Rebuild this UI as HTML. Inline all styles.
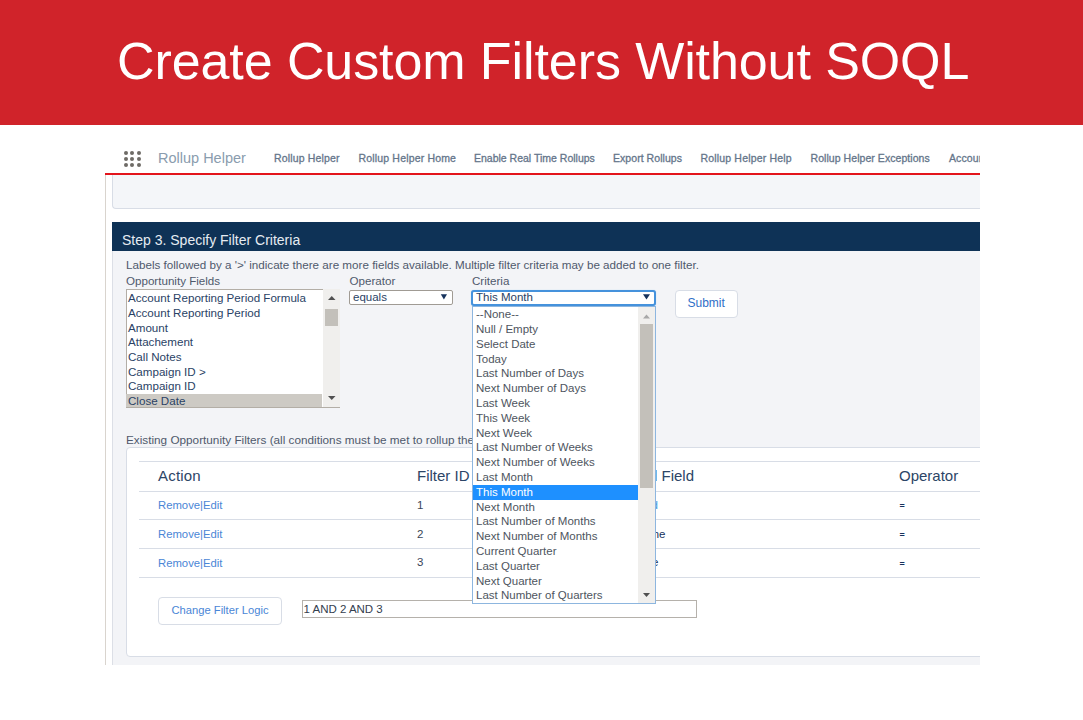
<!DOCTYPE html>
<html><head><meta charset="utf-8"><style>
html,body{margin:0;padding:0;background:#fff;width:1083px;height:720px;overflow:hidden;position:relative}
body{font-family:"Liberation Sans", sans-serif}
.t{position:absolute;white-space:nowrap;line-height:1}
</style></head><body>
<div style="position:absolute;left:0px;top:0px;width:1083px;height:125px;background:#d0232a"></div>
<div class="t" style="left:117px;top:34.98px;font-size:52px;color:#fff;letter-spacing:-0.09px">Create Custom Filters Without SOQL</div>
<div style="position:absolute;left:0;top:0;width:980px;height:720px;overflow:hidden">
<div style="position:absolute;left:105px;top:173px;width:875px;height:2px;background:#e3151c"></div>
<div style="position:absolute;left:105px;top:175px;width:1px;height:490px;background:#d9d4ce"></div>
<div style="position:absolute;left:112px;top:175px;width:868px;height:34px;background:#f4f6f9;border-left:1px solid #d8dde6;border-bottom:1px solid #d8dde6;border-bottom-left-radius:4px;box-sizing:border-box"></div>
<div style="position:absolute;left:124.40px;top:151.35px;width:4px;height:4px;border-radius:50%;background:#6e6b66"></div>
<div style="position:absolute;left:124.40px;top:157.30px;width:4px;height:4px;border-radius:50%;background:#6e6b66"></div>
<div style="position:absolute;left:124.40px;top:163.40px;width:4px;height:4px;border-radius:50%;background:#6e6b66"></div>
<div style="position:absolute;left:130.30px;top:151.35px;width:4px;height:4px;border-radius:50%;background:#6e6b66"></div>
<div style="position:absolute;left:130.30px;top:157.30px;width:4px;height:4px;border-radius:50%;background:#6e6b66"></div>
<div style="position:absolute;left:130.30px;top:163.40px;width:4px;height:4px;border-radius:50%;background:#6e6b66"></div>
<div style="position:absolute;left:137.40px;top:151.35px;width:4px;height:4px;border-radius:50%;background:#6e6b66"></div>
<div style="position:absolute;left:137.40px;top:157.30px;width:4px;height:4px;border-radius:50%;background:#6e6b66"></div>
<div style="position:absolute;left:137.40px;top:163.40px;width:4px;height:4px;border-radius:50%;background:#6e6b66"></div>
<div class="t" style="left:158px;top:150.73px;font-size:14.5px;color:#8a9cae;">Rollup Helper</div>
<div class="t" style="left:274px;top:153.11px;font-size:10.5px;color:#64758a;-webkit-text-stroke:0.3px #64758a;letter-spacing:0.15px">Rollup Helper</div>
<div class="t" style="left:358.5px;top:153.11px;font-size:10.5px;color:#64758a;-webkit-text-stroke:0.3px #64758a;letter-spacing:0.17px">Rollup Helper Home</div>
<div class="t" style="left:474px;top:153.11px;font-size:10.5px;color:#64758a;-webkit-text-stroke:0.3px #64758a;letter-spacing:0px">Enable Real Time Rollups</div>
<div class="t" style="left:613px;top:153.11px;font-size:10.5px;color:#64758a;-webkit-text-stroke:0.3px #64758a;letter-spacing:0.05px">Export Rollups</div>
<div class="t" style="left:700.5px;top:153.11px;font-size:10.5px;color:#64758a;-webkit-text-stroke:0.3px #64758a;letter-spacing:0.17px">Rollup Helper Help</div>
<div class="t" style="left:810.5px;top:153.11px;font-size:10.5px;color:#64758a;-webkit-text-stroke:0.3px #64758a;letter-spacing:0.06px">Rollup Helper Exceptions</div>
<div class="t" style="left:949px;top:153.11px;font-size:10.5px;color:#64758a;-webkit-text-stroke:0.3px #64758a;letter-spacing:0.1px">Accounts</div>
<div style="position:absolute;left:112px;top:222px;width:868px;height:29px;background:#0e3256"></div>
<div class="t" style="left:122px;top:232.55px;font-size:14px;color:#e6ecf2;">Step 3. Specify Filter Criteria</div>
<div style="position:absolute;left:112px;top:251px;width:868px;height:414px;background:#f3f4f7;border-left:1px solid #dcdfe6;box-sizing:border-box"></div>
<div class="t" style="left:126px;top:259.14px;font-size:11.65px;color:#4f596c;">Labels followed by a '&gt;' indicate there are more fields available. Multiple filter criteria may be added to one filter.</div>
<div class="t" style="left:126px;top:274.98px;font-size:11.6px;color:#4f596c;">Opportunity Fields</div>
<div class="t" style="left:349.5px;top:274.98px;font-size:11.6px;color:#4f596c;">Operator</div>
<div class="t" style="left:472px;top:274.98px;font-size:11.6px;color:#4f596c;">Criteria</div>
<div style="position:absolute;left:126px;top:289px;width:214px;height:119px;background:#fff;border:1px solid #b3aea6;box-sizing:border-box"></div>
<div style="position:absolute;left:126px;top:394px;width:196px;height:13px;background:#cdcac4"></div>
<div class="t" style="left:128px;top:292.18px;font-size:11.6px;color:#2a4265;">Account Reporting Period Formula</div>
<div class="t" style="left:128px;top:306.88px;font-size:11.6px;color:#2a4265;">Account Reporting Period</div>
<div class="t" style="left:128px;top:321.58px;font-size:11.6px;color:#2a4265;">Amount</div>
<div class="t" style="left:128px;top:336.28px;font-size:11.6px;color:#2a4265;">Attachement</div>
<div class="t" style="left:128px;top:350.98px;font-size:11.6px;color:#2a4265;">Call Notes</div>
<div class="t" style="left:128px;top:365.68px;font-size:11.6px;color:#2a4265;">Campaign ID &gt;</div>
<div class="t" style="left:128px;top:380.38px;font-size:11.6px;color:#2a4265;">Campaign ID</div>
<div class="t" style="left:128px;top:395.08px;font-size:11.6px;color:#2a4265;">Close Date</div>
<div style="position:absolute;left:322.5px;top:289px;width:17.5px;height:118px;background:#f0efed"></div>
<svg style="position:absolute;left:322px;top:289px" width="18" height="118"><path d="M6,11 L13.5,11 L9.75,7 Z" fill="#505050"/><path d="M6,107 L13.5,107 L9.75,111 Z" fill="#505050"/></svg>
<div style="position:absolute;left:325.3px;top:309px;width:12.7px;height:16.75px;background:#c3c0ba"></div>
<div style="position:absolute;left:349px;top:290px;width:104px;height:15px;background:#fff;border:1px solid #a09b94;border-radius:2px;box-sizing:border-box"></div>
<div class="t" style="left:353px;top:291.57px;font-size:11.5px;color:#2a4265;">equals</div>
<svg style="position:absolute;left:440px;top:293px" width="8" height="8"><path d="M0.8,1.3 L7,1.3 L3.9,6.6 Z" fill="#16325c"/></svg>
<div style="position:absolute;left:471px;top:290px;width:185px;height:16px;background:#fff;border:2px solid #4592dc;border-radius:3px;box-shadow:0 0 1px #9cc6f0;box-sizing:border-box"></div>
<div class="t" style="left:476px;top:291.87px;font-size:11.5px;color:#2a4265;">This Month</div>
<svg style="position:absolute;left:642px;top:293px" width="9" height="8"><path d="M1,1.3 L8,1.3 L4.5,6.6 Z" fill="#16325c"/></svg>
<div style="position:absolute;left:674.5px;top:289.5px;width:63.5px;height:28px;background:#fff;border:1px solid #d8dde6;border-radius:4px;box-sizing:border-box"></div>
<div class="t" style="left:687.5px;top:296.84px;font-size:12px;color:#2f6fc7;">Submit</div>
<div class="t" style="left:126px;top:433.65px;font-size:11.75px;color:#4f596c;">Existing Opportunity Filters (all conditions must be met to rollup the value)</div>
<div style="position:absolute;left:126px;top:447px;width:860px;height:210px;background:#fff;border:1px solid #d8dde6;border-radius:4px;box-sizing:border-box"></div>
<div style="position:absolute;left:139px;top:461px;width:841px;height:1px;background:#d8dde6"></div>
<div style="position:absolute;left:139px;top:491px;width:841px;height:1px;background:#d8dde6"></div>
<div style="position:absolute;left:139px;top:519px;width:841px;height:1px;background:#d8dde6"></div>
<div style="position:absolute;left:139px;top:548px;width:841px;height:1px;background:#d8dde6"></div>
<div style="position:absolute;left:139px;top:577px;width:841px;height:1px;background:#d8dde6"></div>
<div class="t" style="left:158px;top:468.30px;font-size:15px;color:#2c4566;letter-spacing:0.2px">Action</div>
<div class="t" style="left:417px;top:468.30px;font-size:15px;color:#2c4566;">Filter ID</div>
<div class="t" style="right:286px;top:468.30px;font-size:15px;color:#2c4566;">Summarized Field</div>
<div class="t" style="left:899px;top:468.30px;font-size:15px;color:#2c4566;">Operator</div>
<div class="t" style="left:158px;top:500.33px;font-size:11.3px;color:#4a86d6;">Remove|Edit</div>
<div class="t" style="left:417px;top:499.77px;font-size:11.5px;color:#3a4658;">1</div>
<div class="t" style="left:899.5px;top:501.88px;font-size:9px;color:#16325c;font-weight:bold">=</div>
<div class="t" style="left:158px;top:529.33px;font-size:11.3px;color:#4a86d6;">Remove|Edit</div>
<div class="t" style="left:417px;top:528.77px;font-size:11.5px;color:#3a4658;">2</div>
<div class="t" style="left:899.5px;top:530.88px;font-size:9px;color:#16325c;font-weight:bold">=</div>
<div class="t" style="left:158px;top:558.03px;font-size:11.3px;color:#4a86d6;">Remove|Edit</div>
<div class="t" style="left:417px;top:557.47px;font-size:11.5px;color:#3a4658;">3</div>
<div class="t" style="left:899.5px;top:559.58px;font-size:9px;color:#16325c;font-weight:bold">=</div>
<div class="t" style="right:322.20000000000005px;top:499.77px;font-size:11.5px;color:#3a9ae0;">Record</div>
<div class="t" style="right:314.5px;top:528.77px;font-size:11.5px;color:#16325c;">Account Name</div>
<div class="t" style="right:321.5px;top:557.47px;font-size:11.5px;color:#16325c;">Close Date</div>
<div style="position:absolute;left:158px;top:596.5px;width:123.5px;height:28px;background:#fff;border:1px solid #d8dde6;border-radius:4px;box-sizing:border-box"></div>
<div class="t" style="left:171.5px;top:605.02px;font-size:11.2px;color:#4a86d6;">Change Filter Logic</div>
<div style="position:absolute;left:301.5px;top:600px;width:395.5px;height:17.5px;background:#fff;border:1px solid #b5b1ab;box-sizing:border-box"></div>
<div class="t" style="left:303.5px;top:604.17px;font-size:11.5px;color:#34404f;">1 AND 2 AND 3</div>
<div style="position:absolute;left:471.5px;top:306px;width:184px;height:297.5px;background:#fff;border:1px solid #8db6df;box-sizing:border-box"></div>
<div style="position:absolute;left:472.5px;top:485px;width:165.5px;height:14.5px;background:#1e90ff"></div>
<div class="t" style="left:476px;top:309.17px;font-size:11.5px;color:#4e5560;">--None--</div>
<div class="t" style="left:476px;top:323.97px;font-size:11.5px;color:#4e5560;">Null / Empty</div>
<div class="t" style="left:476px;top:338.78px;font-size:11.5px;color:#4e5560;">Select Date</div>
<div class="t" style="left:476px;top:353.58px;font-size:11.5px;color:#4e5560;">Today</div>
<div class="t" style="left:476px;top:368.39px;font-size:11.5px;color:#4e5560;">Last Number of Days</div>
<div class="t" style="left:476px;top:383.19px;font-size:11.5px;color:#4e5560;">Next Number of Days</div>
<div class="t" style="left:476px;top:398.00px;font-size:11.5px;color:#4e5560;">Last Week</div>
<div class="t" style="left:476px;top:412.80px;font-size:11.5px;color:#4e5560;">This Week</div>
<div class="t" style="left:476px;top:427.61px;font-size:11.5px;color:#4e5560;">Next Week</div>
<div class="t" style="left:476px;top:442.41px;font-size:11.5px;color:#4e5560;">Last Number of Weeks</div>
<div class="t" style="left:476px;top:457.22px;font-size:11.5px;color:#4e5560;">Next Number of Weeks</div>
<div class="t" style="left:476px;top:472.02px;font-size:11.5px;color:#4e5560;">Last Month</div>
<div class="t" style="left:476px;top:486.83px;font-size:11.5px;color:#fff;">This Month</div>
<div class="t" style="left:476px;top:501.63px;font-size:11.5px;color:#4e5560;">Next Month</div>
<div class="t" style="left:476px;top:516.44px;font-size:11.5px;color:#4e5560;">Last Number of Months</div>
<div class="t" style="left:476px;top:531.24px;font-size:11.5px;color:#4e5560;">Next Number of Months</div>
<div class="t" style="left:476px;top:546.05px;font-size:11.5px;color:#4e5560;">Current Quarter</div>
<div class="t" style="left:476px;top:560.85px;font-size:11.5px;color:#4e5560;">Last Quarter</div>
<div class="t" style="left:476px;top:575.66px;font-size:11.5px;color:#4e5560;">Next Quarter</div>
<div class="t" style="left:476px;top:590.46px;font-size:11.5px;color:#4e5560;">Last Number of Quarters</div>
<div style="position:absolute;left:638px;top:307px;width:16.5px;height:295.5px;background:#f0efed"></div>
<svg style="position:absolute;left:638px;top:307px" width="17" height="296"><path d="M5,11.5 L12,11.5 L8.5,7.5 Z" fill="#a8a8a8"/><path d="M5,286 L12,286 L8.5,290 Z" fill="#505050"/></svg>
<div style="position:absolute;left:639.7px;top:324px;width:13px;height:163.5px;background:#c3c0ba"></div>
</div>
</body></html>
